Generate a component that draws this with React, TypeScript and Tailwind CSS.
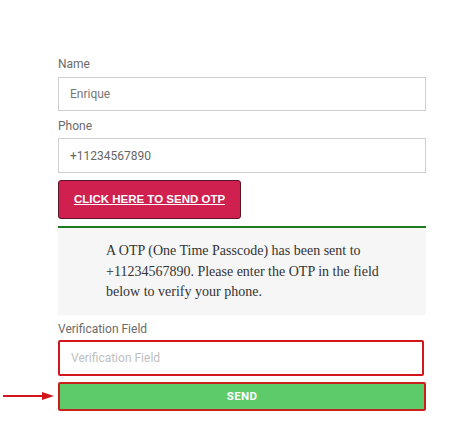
import React from 'react';

const App = () => {
  return (
    <div className="w-[474px] h-[440px] bg-white relative font-['Roboto',sans-serif]">
      <div className="pt-[57px] pl-[58px] w-[426px]">
        {/* Name */}
        <div className="text-[12px] leading-[14px] text-[#6b6b6b]">Name</div>
        <div className="mt-[6px] h-[34px] border border-[#cfcfcf] flex items-center pl-[11px] text-[12px] text-[#777]">
          Enrique
        </div>

        {/* Phone */}
        <div className="mt-[8px] text-[12px] leading-[14px] text-[#6b6b6b]">Phone</div>
        <div className="mt-[5px] h-[35px] border border-[#cfcfcf] flex items-center pl-[11px] text-[12px] text-[#666]">
          +11234567890
        </div>

        {/* OTP button */}
        <div className="mt-[7px] w-[183px] h-[39px] bg-[#d0204f] border border-[#5a1627] rounded-[3px] flex items-center justify-center">
          <span className="text-white font-bold underline text-[11.5px] font-['Liberation_Sans',Arial,sans-serif]">
            CLICK HERE TO SEND OTP
          </span>
        </div>

        {/* Notice */}
        <div className="mt-[7px] border-t-2 border-[#1f7a1f] bg-[#f6f6f6] h-[89px] pl-[48px] pt-[13px] pr-[20px]">
          <p className="font-['Liberation_Serif','Times_New_Roman',serif] text-[14px] leading-[20.5px] text-[#333]">
            A OTP (One Time Passcode) has been sent to
            <br />
            +11234567890. Please enter the OTP in the field
            <br />
            below to verify your phone.
          </p>
        </div>

        {/* Verification */}
        <div className="mt-[7px] text-[12px] leading-[14px] text-[#6b6b6b]">Verification Field</div>
        <div className="mt-[4px] w-[366px] h-[36px] border-2 border-[#d3151c] rounded-[2px] flex items-center pl-[11px] text-[12px] text-[#c0c0c0]">
          Verification Field
        </div>

        {/* Send */}
        <div className="mt-[6px] h-[29px] bg-[#5ecb6b] border-2 border-[#c8201c] rounded-[2px] flex items-center justify-center">
          <span className="text-white font-bold text-[11.5px] tracking-[0.3px]">SEND</span>
        </div>
      </div>

      {/* Arrow */}
      <svg className="absolute left-[2px] top-[389px]" width="52" height="14" viewBox="0 0 52 14">
        <line x1="1" y1="7" x2="42" y2="7" stroke="#d3151c" strokeWidth="2" />
        <polygon points="40,3 52,7 40,11" fill="#d3151c" />
      </svg>
    </div>
  );
};

export default App;
